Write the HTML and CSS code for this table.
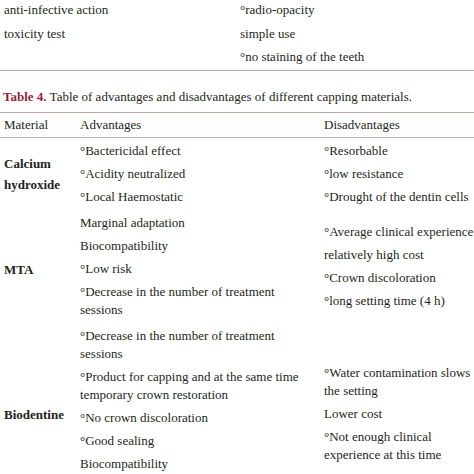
FILE: index.html
```html
<!DOCTYPE html>
<html>
<head>
<meta charset="utf-8">
<link rel="stylesheet" href="styles.css">
</head>
<body>
<div class="prev">
  <div class="prev-row"><span class="pl">anti-infective action</span><span class="pr">°radio-opacity</span></div>
  <div class="prev-row"><span class="pl">toxicity test</span><span class="pr">simple use</span></div>
  <div class="prev-row"><span class="pl"></span><span class="pr">°no staining of the teeth</span></div>
</div>
<p class="caption"><b class="tno">Table 4.</b> Table of advantages and disadvantages of different capping materials.</p>
<table class="tbl">
  <colgroup><col class="c1"><col class="c2"><col class="c3"></colgroup>
  <thead>
    <tr><th>Material</th><th>Advantages</th><th>Disadvantages</th></tr>
  </thead>
  <tbody>
    <tr>
      <td class="mat">Calcium<br>hydroxide</td>
      <td><div class="it">°Bactericidal effect</div><div class="it">°Acidity neutralized</div><div class="it">°Local Haemostatic</div></td>
      <td><div class="it">°Resorbable</div><div class="it">°low resistance</div><div class="it">°Drought of the dentin cells</div></td>
    </tr>
    <tr class="mta">
      <td class="mat">MTA</td>
      <td><div class="it">Marginal adaptation</div><div class="it">Biocompatibility</div><div class="it">°Low risk</div><div class="it">°Decrease in the number of treatment<br>sessions</div></td>
      <td><div class="it">°Average clinical experience</div><div class="it">relatively high cost</div><div class="it">°Crown discoloration</div><div class="it">°long setting time (4 h)</div></td>
    </tr>
    <tr class="bio">
      <td class="mat">Biodentine</td>
      <td class="bio-adv"><div class="it">°Decrease in the number of treatment<br>sessions</div><div class="it">°Product for capping and at the same time<br>temporary crown restoration</div><div class="it">°No crown discoloration</div><div class="it">°Good sealing</div><div class="it">Biocompatibility</div></td>
      <td><div class="it">°Water contamination slows<br>the setting</div><div class="it">Lower cost</div><div class="it">°Not enough clinical<br>experience at this time</div></td>
    </tr>
  </tbody>
</table>
</body>
</html>
```
FILE: styles.css
```css
html, body {
  margin: 0;
  padding: 0;
  background: #ffffff;
  overflow: hidden;
}
body {
  font-family: "Liberation Serif", "Times New Roman", serif;
  font-size: 13px;
  color: #231f20;
  width: 474px;
}
.prev {
  margin-top: -2px;
  padding-bottom: 1px;
  border-bottom: 1.5px solid #c4a3a6;
}
.prev-row {
  display: grid;
  grid-template-columns: 236px 1fr;
  padding-left: 4px;
  height: 23.5px;
  line-height: 23.5px;
  white-space: nowrap;
}
.caption {
  margin: 17.5px 0 6px 3px;
  line-height: 18px;
  white-space: nowrap;
}
.tno {
  color: #9b1f33;
}
.tbl {
  width: 474px;
  border-collapse: collapse;
  table-layout: fixed;
}
.c1 { width: 76px; }
.c2 { width: 244px; }
.c3 { width: 154px; }
.tbl thead tr {
  border-top: 1.5px solid #c4a3a6;
  border-bottom: 1.5px solid #c9b0b2;
}
.tbl th {
  font-weight: normal;
  text-align: left;
  padding: 3px 4px;
  line-height: 18px;
}
.tbl td {
  padding: 1.5px 4px;
  vertical-align: middle;
  white-space: nowrap;
}
.it {
  padding: 2.5px 0;
  line-height: 18px;
}
.mat {
  font-weight: bold;
  line-height: 21px;
}
.mta .mat {
  padding-top: 8px;
}
.bio-adv {
  padding-bottom: 30px !important;
}
```
